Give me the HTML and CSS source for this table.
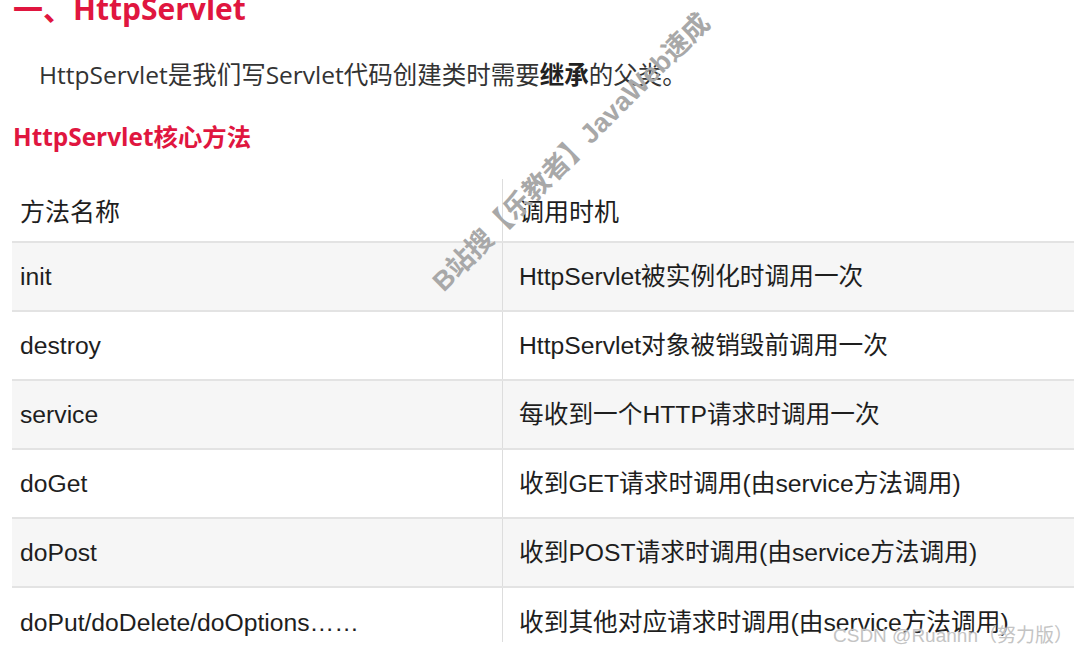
FILE: index.html
```html
<html>

<head>
    <title>HttpServlet</title>
    <link rel="stylesheet" href="styles.css">
</head>

<body>
    <div class="page">
        <h1 class="title">一、HttpServlet</h1>
        <p class="intro">HttpServlet是我们写Servlet代码创建类时需要<b>继承</b>的父类。</p>
        <h2 class="subtitle">HttpServlet核心方法</h2>
        <table class="methods">
            <tr class="head">
                <td class="name">方法名称</td>
                <td class="when">调用时机</td>
            </tr>
            <tr class="odd">
                <td class="name">init</td>
                <td class="when">HttpServlet被实例化时调用一次</td>
            </tr>
            <tr>
                <td class="name">destroy</td>
                <td class="when">HttpServlet对象被销毁前调用一次</td>
            </tr>
            <tr class="odd">
                <td class="name">service</td>
                <td class="when">每收到一个HTTP请求时调用一次</td>
            </tr>
            <tr>
                <td class="name">doGet</td>
                <td class="when">收到GET请求时调用(由service方法调用)</td>
            </tr>
            <tr class="odd">
                <td class="name">doPost</td>
                <td class="when">收到POST请求时调用(由service方法调用)</td>
            </tr>
            <tr class="last">
                <td class="name">doPut/doDelete/doOptions……</td>
                <td class="when">收到其他对应请求时调用(由service方法调用)</td>
            </tr>
        </table>
    </div>
    <div class="stamp">B站搜【乐教者】JavaWeb速成</div>
    <div class="credit">CSDN @Ruannn（努力版）</div>
</body>

</html>
```

FILE: styles.css
```css
body {
    margin: 0;
    background-color: #ffffff;
    overflow: hidden;
    font-family: "Open Sans", "Noto Sans CJK SC", sans-serif;
}

.page {
    padding-left: 12px;
}

.title {
    margin: -9px 0 0 1px;
    font-size: 30px;
    line-height: 36px;
    font-weight: bold;
    color: #e0163f;
}

.intro {
    margin: 30px 0 0 0;
    padding-left: 27px;
    font-size: 24.5px;
    line-height: 36px;
    color: #333333;
}

.intro b {
    color: #222222;
}

.subtitle {
    margin: 26px 0 0 1px;
    font-size: 24.4px;
    line-height: 36px;
    font-weight: bold;
    color: #e0163f;
}

.methods {
    margin-top: 24px;
    width: 1062px;
    border-collapse: collapse;
    font-family: "Liberation Sans", "Noto Sans CJK SC", sans-serif;
    font-size: 24.7px;
    color: #1e1e1e;
}

.methods td {
    height: 69px;
    padding: 0;
    line-height: 30px;
    vertical-align: middle;
    border-top: 2px solid #e3e3e3;
}

.methods .head td {
    height: 63px;
    border-top: none;
    font-family: "Noto Sans CJK SC", sans-serif;
    font-size: 25px;
}

.methods .odd td {
    background-color: #f6f6f6;
}

.methods .last td {
    height: 55px;
    vertical-align: top;
    padding-top: 20px !important;
}

.name {
    width: 482px;
    padding-left: 8px !important;
    border-right: 1px solid #dddddd;
}

.when {
    padding-left: 16px !important;
}

.stamp {
    position: absolute;
    left: 380px;
    top: 131px;
    transform: rotate(-45deg);
    font-family: "Liberation Sans", "Noto Sans CJK SC", sans-serif;
    font-size: 27px;
    font-weight: bold;
    color: #a8a8a8;
    white-space: nowrap;
}

.credit {
    position: absolute;
    left: 833px;
    top: 620px;
    font-family: "Liberation Sans", "Noto Sans CJK SC", sans-serif;
    font-size: 19px;
    color: #c4c4c4;
    text-shadow: 0 0 2px #ffffff;
    white-space: nowrap;
}
```
